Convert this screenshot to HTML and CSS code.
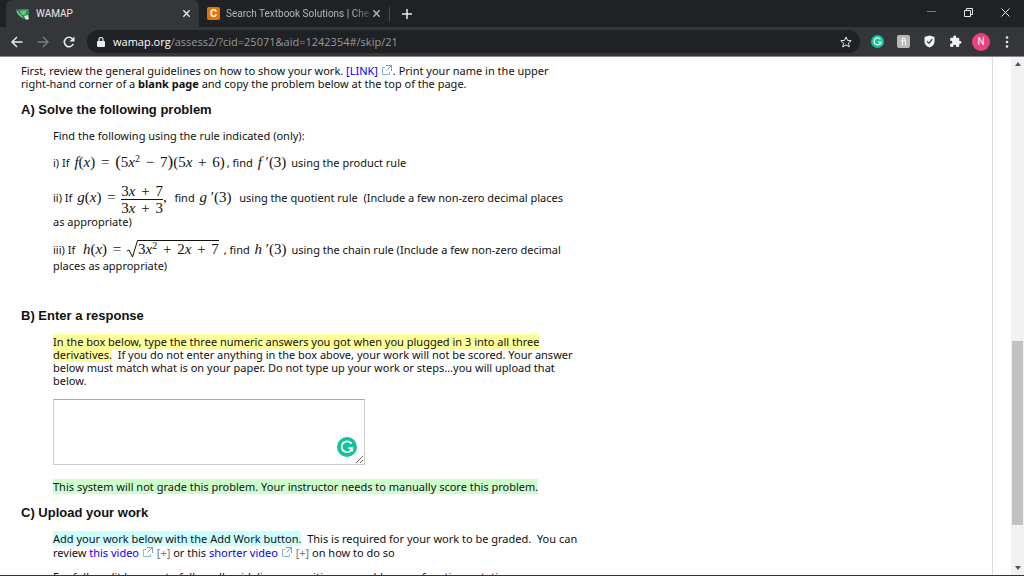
FILE: index.html
```html
<!DOCTYPE html>
<html lang="en">
<head>
    <title>WAMAP</title>
    <meta charset="UTF-8">
    <link rel="stylesheet" href="styles.css">
</head>
<body>
    <svg class="defs" aria-hidden="true">
        <symbol id="ext" viewBox="0 0 10 10">
            <path d="M3 2.5H.5v7h7V7" fill="none" stroke="#8fb4d6"/>
            <path d="M4 .5h5.5V6M9.500.5L4.500 5.500" fill="none" stroke="#6f9fcb"/>
        </symbol>
        <symbol id="grammarly" viewBox="0 0 20 20">
            <circle cx="10" cy="10" r="10" fill="#15c39a"/>
            <path d="M14.5 6.7A5.4 5.4 0 1 0 15.3 11H11.2M15.3 11v3.4" fill="none" stroke="#fff" stroke-width="1.7"/>
        </symbol>
        <symbol id="close" viewBox="0 0 10 10">
            <path d="M1.5 1.5l7 7M8.5 1.5l-7 7" fill="none" stroke="currentColor" stroke-width="1.5"/>
        </symbol>
    </svg>

    <header class="browser">
        <div class="tabs">
            <div class="tab active">
                <svg class="favicon" viewBox="0 0 14 14">
                    <path d="M0 2l3 1V2h10v6l-2 4H7L3 9 1 7z" fill="#2e8b57"/>
                    <path d="M4 4l7-1-2 5H6z" fill="#6cc08b"/>
                    <path d="M1 4l2 3 3 3" fill="none" stroke="#b9d8c4"/>
                    <path d="M8 9l4-1 1 4-3 1z" fill="#e9e4d2"/>
                </svg>
                <span class="tab-title">WAMAP</span>
                <button class="icon-btn" aria-label="Close tab"><svg class="x"><use href="#close"/></svg></button>
            </div>
            <div class="tab">
                <span class="chegg">C</span>
                <span class="tab-title fade">Search Textbook Solutions | Cheg</span>
                <button class="icon-btn" aria-label="Close tab"><svg class="x"><use href="#close"/></svg></button>
            </div>
            <button class="icon-btn new-tab" aria-label="New tab">
                <svg class="plus" viewBox="0 0 10 10"><path d="M5 0v10M0 5h10" stroke="currentColor" stroke-width="1.5"/></svg>
            </button>
            <div class="window-btns">
                <button class="icon-btn dim" aria-label="Minimize"><svg class="win" viewBox="0 0 9 9"><path d="M0 3.5h9" stroke="currentColor"/></svg></button>
                <button class="icon-btn" aria-label="Restore"><svg class="win" viewBox="0 0 9 9"><path d="M.5 2.5h6v6h-6zM2.5 2.5V.5h6v6h-2" fill="none" stroke="currentColor"/></svg></button>
                <button class="icon-btn" aria-label="Close"><svg class="win" viewBox="0 0 9 9"><path d="M.5.5l8 8M8.5.5l-8 8" stroke="currentColor"/></svg></button>
            </div>
        </div>
        <div class="toolbar">
            <div class="nav">
                <button class="icon-btn" aria-label="Back"><svg class="arrow" viewBox="0 0 12 12"><path d="M11.5 6H1.5M6 1L1 6l5 5" fill="none" stroke="currentColor" stroke-width="1.5"/></svg></button>
                <button class="icon-btn dim" aria-label="Forward"><svg class="arrow" viewBox="0 0 12 12"><path d="M.5 6h10M6 1l5 5-5 5" fill="none" stroke="currentColor" stroke-width="1.4"/></svg></button>
                <button class="icon-btn" aria-label="Reload"><svg class="arrow" viewBox="0 0 12 12"><path d="M10.3 8A4.7 4.7 0 1 1 9.5 2.8" fill="none" stroke="currentColor" stroke-width="1.6"/><path d="M11.5.5v5h-5z" fill="currentColor"/></svg></button>
            </div>
            <div class="address">
                <svg class="lock" viewBox="0 0 8 10"><rect y="4" width="8" height="6" rx="1" fill="#e8eaed"/><path d="M2 4V2.5a2 2 0 0 1 4 0V4" fill="none" stroke="#e8eaed" stroke-width="1.2"/></svg>
                <span class="url"><b>wamap.org</b>/assess2/?cid=25071&amp;aid=1242354#/skip/21</span>
                <button class="icon-btn" aria-label="Bookmark"><svg class="arrow" viewBox="0 0 12 12"><path d="M6 1l1.5 3.4 3.7.3-2.8 2.5.9 3.7L6 8.9l-3.3 2 .9-3.7L.8 4.7l3.7-.3z" fill="none" stroke="currentColor"/></svg></button>
            </div>
            <div class="extensions">
                <button class="icon-btn" aria-label="Grammarly"><svg class="ext-icon"><use href="#grammarly"/></svg></button>
                <button class="icon-btn" aria-label="Honey"><svg class="ext-icon" viewBox="0 0 13 13"><rect width="13" height="13" rx="2" fill="#b8b8b8"/><path d="M5.5 2.5v8M3.5 6H9M8.5 6v4.5M5.5 3.5H8V6" fill="none" stroke="#f5f5f5"/></svg></button>
                <button class="icon-btn" aria-label="Shield"><svg class="ext-icon" viewBox="0 0 13 13"><path d="M6.5.5l5 1.5v4.5c0 3-2 5-5 6-3-1-5-3-5-6V2z" fill="#f1f3f4"/><path d="M4 6.2l2 2 3.2-4" fill="none" stroke="#4a4c50" stroke-width="1.4"/></svg></button>
                <button class="icon-btn" aria-label="Extensions"><svg class="ext-icon" viewBox="0 0 24 24"><path d="M20.5 11H19V7a2 2 0 0 0-2-2h-4V3.5a2.5 2.5 0 0 0-5 0V5H4a2 2 0 0 0-2 2v3.8h1.5a2.7 2.7 0 0 1 0 5.4H2V20a2 2 0 0 0 2 2h3.8v-1.5a2.7 2.7 0 0 1 5.4 0V22H17a2 2 0 0 0 2-2v-4h1.5a2.5 2.5 0 0 0 0-5z" fill="#f1f3f4"/></svg></button>
                <button class="icon-btn" aria-label="Profile"><span class="avatar">N</span></button>
                <button class="icon-btn" aria-label="Menu"><svg class="dots" viewBox="0 0 4 12"><g fill="currentColor"><circle cx="2" cy="1.5" r="1.3"/><circle cx="2" cy="6" r="1.3"/><circle cx="2" cy="10.5" r="1.3"/></g></svg></button>
            </div>
        </div>
    </header>

    <div class="viewport">
        <main class="page">
            <p>First, review the general guidelines on how to show your work. <a href="#">[LINK]</a> <svg class="ext"><use href="#ext"/></svg>. Print your name in the upper<br>
            right-hand corner of a <b>blank page</b> and copy the problem below at the top of the page.</p>

            <h2>A) Solve the following problem</h2>
            <div class="indent">
                <p>Find the following using the rule indicated (only):</p>
                <p class="product">i) If <span class="math"><i>f</i>(<i>x</i>) <span class="op">=</span> <span class="paren">(</span>5<i>x</i><sup>2</sup> <span class="op">−</span> 7<span class="paren">)</span>(5<i>x</i> <span class="op">+</span> 6)</span>, find <span class="math"><i>f</i> ′(3)</span> using the product rule</p>
                <p class="quotient">ii) If <span class="math"><i>g</i>(<i>x</i>) <span class="op">=</span> <span class="frac"><span>3<i>x</i> <span class="op">+</span> 7</span><span class="den">3<i>x</i> <span class="op">+</span> 3</span></span>,</span>&nbsp; find <span class="math"><i>g</i> ′(3)</span>&nbsp; using the quotient rule&nbsp; (Include a few non-zero decimal places<br>
                as appropriate)</p>
                <p class="chain">iii) If&nbsp; <span class="math"><i>h</i>(<i>x</i>) <span class="op">=</span> <span class="root"><svg class="radical" viewBox="0 0 11 18"><path d="M0 11l2-1 3.5 7L10.5.5h.5" fill="none" stroke="#111"/></svg><span class="radicand">3<i>x</i><sup>2</sup> <span class="op">+</span> 2<i>x</i> <span class="op">+</span> 7</span></span></span> , find <span class="math"><i>h</i> ′(3)</span> using the chain rule (Include a few non-zero decimal<br>
                places as appropriate)</p>
            </div>

            <h2><label for="answer">B) Enter a response</label></h2>
            <div class="indent">
                <p><mark class="yellow">In the box below, type the three numeric answers you got when you plugged in 3 into all three<br>
                derivatives.</mark>&nbsp; If you do not enter anything in the box above, your work will not be scored. Your answer<br>
                below must match what is on your paper. Do not type up your work or steps...you will upload that<br>
                below.</p>
                <div class="answer-box">
                    <textarea id="answer"></textarea>
                    <svg class="badge"><use href="#grammarly"/></svg>
                </div>
                <p><mark class="green">This system will not grade this problem. Your instructor needs to manually score this problem.</mark></p>
            </div>

            <h2>C) Upload your work</h2>
            <div class="indent">
                <p class="upload"><mark class="cyan">Add your work below with the Add Work button.</mark>&nbsp; This is required for your work to be graded.&nbsp; You can<br>
                review <a href="#">this video</a> <svg class="ext"><use href="#ext"/></svg> <span class="more">[+]</span> or this <a href="#">shorter video</a> <svg class="ext"><use href="#ext"/></svg> <span class="more">[+]</span> on how to do so</p>
                <p>For full credit be sure to follow all guidelines on writing up problems or function notation</p>
            </div>
        </main>
        <div class="scrollbar">
            <svg class="caret" viewBox="0 0 6 4"><path d="M0 4l3-4 3 4z" fill="#505050"/></svg>
            <div class="track"><div class="thumb"></div></div>
            <svg class="caret" viewBox="0 0 6 4"><path d="M0 0l3 4 3-4z" fill="#505050"/></svg>
        </div>
    </div>
</body>
</html>
```
FILE: styles.css
```css
* {
    box-sizing: border-box;
}
body {
    margin: 0;
    height: 100vh;
    display: flex;
    flex-direction: column;
    overflow: hidden;
    background-color: #fff;
    color: #111;
    font-family: "Noto Sans", "Open Sans", sans-serif;
    font-size: 11px;
    line-height: 13px;
}
.defs {
    display: none;
}

/* browser bar */
.browser {
    background-color: #35363a;
    color: #e8eaed;
    border-bottom: 1px solid #858585;
}
.icon-btn {
    display: flex;
    align-items: center;
    justify-content: center;
    padding: 0;
    border: none;
    background: none;
    color: inherit;
}
.dim {
    color: #7c7e82;
}
.tabs {
    display: flex;
    align-items: center;
    height: 27px;
    padding-left: 6px;
    background-color: #202124;
}
.tab {
    display: flex;
    align-items: center;
    gap: 6px;
    width: 190px;
    height: 27px;
    padding: 0 8px;
    color: #b4b6ba;
    font-family: Roboto, sans-serif;
    font-size: 10px;
}
.tab.active {
    width: 193px;
    padding-left: 10px;
    background-color: #35363a;
    border-radius: 6px 6px 0 0;
    color: #e8eaed;
}
.tab-title {
    flex: 1;
    min-width: 0;
    overflow: hidden;
    white-space: nowrap;
}
.fade {
    margin-right: -4px;
    mask-image: linear-gradient(to right, #000 88%, rgba(0,0,0,0.2));
}
.favicon {
    width: 14px;
    height: 14px;
}
.chegg {
    width: 13px;
    height: 13px;
    border-radius: 2px;
    background-color: #eb7100;
    color: #fff;
    font-size: 11px;
    font-weight: bold;
    text-align: center;
}
.x {
    width: 9px;
    height: 9px;
}
.new-tab {
    padding-left: 12px;
    border-left: 1px solid #4a4c50;
}
.plus {
    width: 10px;
    height: 14px;
}
.window-btns {
    display: flex;
    gap: 28px;
    margin-left: auto;
    padding: 0 14px 3px 0;
}
.win {
    width: 9px;
    height: 9px;
}
.toolbar {
    display: flex;
    align-items: center;
    height: 29px;
}
.nav {
    display: flex;
    gap: 14px;
    padding: 0 12px 0 11px;
}
.arrow {
    width: 12px;
    height: 12px;
}
.address {
    flex: 1;
    display: flex;
    align-items: center;
    gap: 8px;
    height: 23px;
    padding: 0 8px 0 10px;
    border-radius: 12px;
    background-color: #202124;
}
.lock {
    width: 8px;
    height: 10px;
}
.url {
    flex: 1;
    color: #96999d;
    font-family: "Open Sans", sans-serif;
    font-size: 11px;
}
.url b {
    color: #fff;
    font-weight: normal;
}
.extensions {
    display: flex;
    align-items: center;
    padding: 0 4px;
}
.extensions .icon-btn {
    width: 26px;
}
.ext-icon {
    width: 13px;
    height: 13px;
}
.avatar {
    width: 18px;
    height: 18px;
    border-radius: 50%;
    background-color: #ec407a;
    color: #fff;
    font-family: Roboto, sans-serif;
    font-size: 10px;
    line-height: 18px;
}
.dots {
    width: 4px;
    height: 12px;
}

/* page */
.viewport {
    flex: 1;
    min-height: 0;
    display: flex;
    border-bottom: 1px solid #333;
}
.page {
    flex: 1;
    padding: 7px 0 0 21px;
    margin-right: 18px;
    border-right: 1px solid #ddd;
    overflow: hidden;
    white-space: nowrap;
}
p {
    margin: 0 0 12px;
}
a {
    color: #00f;
    text-decoration: none;
}
h2 {
    margin: 0 0 12px;
    font-family: "Liberation Sans", Arial, sans-serif;
    font-size: 13px;
    line-height: 15px;
}
.indent {
    margin-left: 32px;
}
.ext {
    width: 10px;
    height: 10px;
    margin: 0 1px;
}
.more {
    color: #777;
}
.math {
    margin: 0 2px;
    font-family: "Liberation Serif", serif;
    font-size: 15px;
}
.math sup {
    font-size: 10px;
    line-height: 0;
    vertical-align: 5px;
}
.op {
    margin: 0 2px;
}
.paren {
    font-size: 17px;
}
.product {
    line-height: 16px;
}
.frac {
    display: inline-flex;
    flex-direction: column;
    margin-bottom: -1px;
    vertical-align: middle;
    line-height: 16px;
}
.den {
    border-top: 1px solid #111;
}
.root {
    display: inline-flex;
    align-items: baseline;
    line-height: 17px;
}
.radical {
    align-self: flex-end;
    width: 11px;
    height: 18px;
}
.radicand {
    border-top: 1px solid #111;
}
.chain {
    margin-bottom: 34px;
    line-height: 16px;
}
.upload {
    margin-bottom: 10px;
    line-height: 14px;
}
mark {
    color: inherit;
}
.yellow {
    background-color: #ff9;
}
.green {
    background-color: #cfc;
}
.cyan {
    background-color: #cff;
}
.answer-box {
    position: relative;
    width: 312px;
    margin-bottom: 15px;
}
textarea {
    display: block;
    width: 100%;
    height: 66px;
    border: 1px solid #ccc;
    border-top-color: #aaa;
}
.badge {
    position: absolute;
    right: 8px;
    bottom: 8px;
    width: 20px;
    height: 20px;
}

/* scrollbar */
.scrollbar {
    display: flex;
    flex-direction: column;
    align-items: center;
    width: 13px;
    padding: 5px 1px;
    background-color: #f1f1f1;
}
.caret {
    width: 6px;
    height: 4px;
}
.track {
    flex: 1;
    width: 100%;
    display: flex;
    flex-direction: column;
    justify-content: flex-end;
    padding-bottom: 41px;
}
.thumb {
    height: 40%;
    background-color: #c1c1c1;
}
```
